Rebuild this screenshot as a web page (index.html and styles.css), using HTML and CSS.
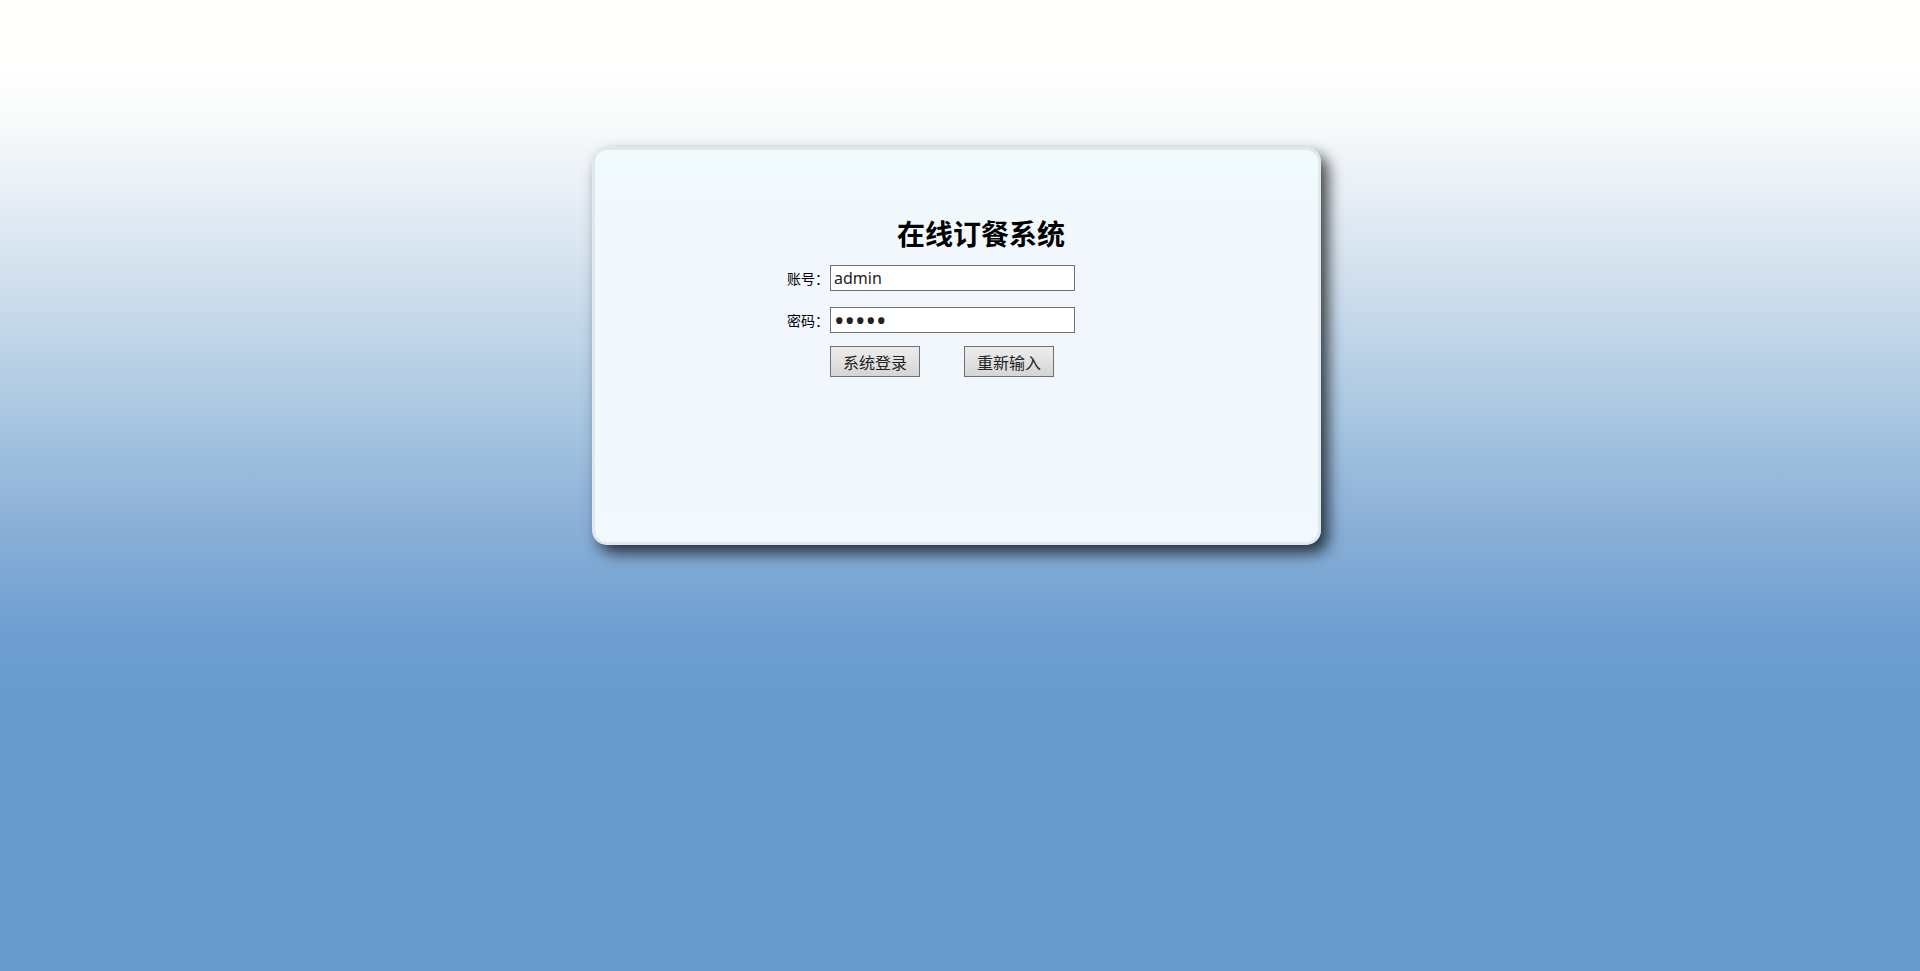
FILE: index.html
```
<!DOCTYPE html>
<html lang="zh-CN">
<head>
  <meta charset="UTF-8">
  <meta name="viewport" content="width=device-width, initial-scale=1.0">
  <title>在线订餐系统</title>
  <link rel="stylesheet" href="styles.css">
</head>
<body>
  <div class="login-panel">
    <form class="login-form" action="#" method="post">
      <h1>在线订餐系统</h1>
      <div class="row">
        <label for="username">账号：</label>
        <input type="text" id="username" name="username" value="admin">
      </div>
      <div class="row">
        <label for="password">密码：</label>
        <input type="password" id="password" name="password" value="admin">
      </div>
      <div class="buttons">
        <button type="submit">系统登录</button>
        <button type="reset">重新输入</button>
      </div>
    </form>
  </div>
</body>
</html>
```

FILE: styles.css
```
* {
  box-sizing: border-box;
}
body {
  margin: 0;
  min-height: 100vh;
  padding: 147px 7px 40px 0;
  font-family: "Noto Sans", "Noto Sans CJK SC", sans-serif;
  font-size: 14px;
  color: #000;
  background: linear-gradient(#fffffe 0, #fffffe 65px, #f8fbfb 120px, #e8eff6 190px, #cbdcec 300px, #a9c7e2 415px, #8db1d8 515px, #6f9fd1 630px, #6699cc 710px, #6699cc 100%);
}
.login-panel {
  width: 100%;
  max-width: 729px;
  min-height: 398px;
  margin: 0 auto;
  padding: 66px 16px 66px 192px;
  border: 3px solid #dde9ea;
  border-radius: 15px;
  background: linear-gradient(#f1fbfd, #f1f7fc 25%, #f1f7fc 75%, #f2fafd);
  box-shadow: 7px 8px 15px rgba(0, 0, 0, 0.72);
}
.login-form {
  max-width: 388px;
}
.login-form h1 {
  margin: 0 0 13px;
  font-size: 28px;
  line-height: 36px;
  text-align: center;
}
.row {
  display: flex;
  align-items: center;
  margin-bottom: 16px;
}
.row label {
  width: 43px;
  white-space: nowrap;
}
.row input {
  width: 245px;
  height: 26px;
  padding: 0 3px;
  border: 1px solid #707070;
  background: #fff;
  color: #222;
  font-family: inherit;
  font-size: 16px;
}
/* larger masking dots */
.row input[type="password"] {
  font-size: 28px;
}
.buttons {
  display: flex;
  gap: 44px;
  margin-top: -3px;
  padding-left: 43px;
}
.buttons button {
  height: 31px;
  padding: 0 12px;
  border: 1px solid #707070;
  background: linear-gradient(#ededed, #d5d5d5);
  color: #222;
  font-family: inherit;
  font-size: 16px;
  white-space: nowrap;
}
```
